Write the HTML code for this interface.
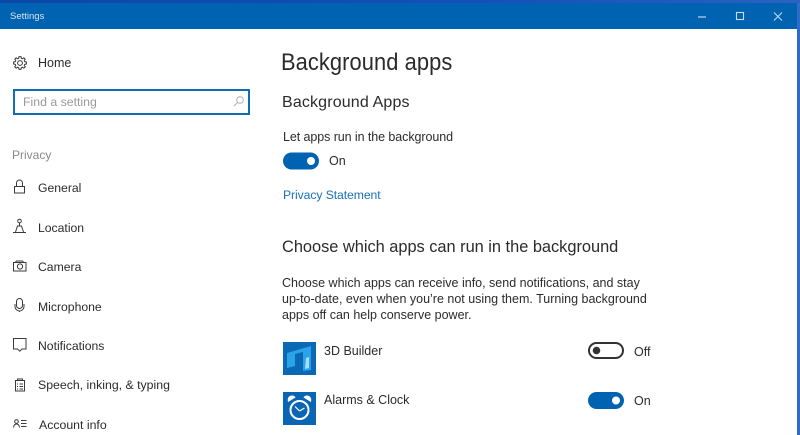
<!DOCTYPE html>
<html><head><meta charset="utf-8">
<style>
html,body{margin:0;padding:0;background:#fff}
#r{position:relative;width:800px;height:435px;overflow:hidden;background:#fff;font-family:"Liberation Sans",sans-serif;color:#2b2b2b}
.t{position:absolute;white-space:nowrap;line-height:1;filter:blur(.35px)}
svg{position:absolute;left:0;top:0}
</style></head><body>
<div id="r">
<div style="position:absolute;left:0;top:0;width:800px;height:4px;background:linear-gradient(90deg,#0a47a6,#1450b8 60%,#2a62c4)"></div>
<div style="position:absolute;left:0;top:3px;width:797px;height:26px;background:#0063b1"></div>
<div style="position:absolute;left:797px;top:3px;width:3px;height:432px;background:#2f6bc8"></div>
<div class="t" style="left:10px;top:12px;font-size:9.5px;color:#d5e6f5">Settings</div>
<svg width="800" height="435" fill="none">
<path d="M698 17H706" stroke="#bcd6ee" stroke-width="1.2"/>
<rect x="736.5" y="12.5" width="7" height="7" stroke="#c6dcf0" stroke-width="1.1"/>
<path d="M774 12.5L782 20.5M782 12.5L774 20.5" stroke="#c6dcf0" stroke-width="1"/>
<g stroke="#3a3a3a" stroke-width="1">
<g transform="translate(20 63)">
<polygon points="4.73,-1.27 6.42,-1.02 6.42,1.02 4.73,1.27 4.24,2.45 5.26,3.82 3.82,5.26 2.45,4.24 1.27,4.73 1.02,6.42 -1.02,6.42 -1.27,4.73 -2.45,4.24 -3.82,5.26 -5.26,3.82 -4.24,2.45 -4.73,1.27 -6.42,1.02 -6.42,-1.02 -4.73,-1.27 -4.24,-2.45 -5.26,-3.82 -3.82,-5.26 -2.45,-4.24 -1.27,-4.73 -1.02,-6.42 1.02,-6.42 1.27,-4.73 2.45,-4.24 3.82,-5.26 5.26,-3.82 4.24,-2.45"/>
<circle r="2.4"/>
</g>
<path d="M14.500 186.500h10v6.500h-10zM16.500 186v-3a3 3 0 0 1 6 0v3"/>
<circle cx="19.500" cy="221" r="1.800"/>
<path d="M15.500 232l2-6h4l2 6M13 232.500h13M19.500 223v3"/>
<rect x="13.500" y="262.500" width="12.500" height="8.500"/>
<circle cx="20" cy="266.500" r="2.600"/>
<path d="M15.500 262l1-1h6l1 1"/>
<rect x="16.500" y="298.500" width="6" height="10" rx="3"/>
<path d="M15 304v2.500a4.500 4.500 0 0 0 9 0V304M19.500 311v1"/>
<path d="M13.500 338.500h12.500v10.500h-4l-2.200 2.200-2.200-2.200h-4.100z"/>
<rect x="15.500" y="380.500" width="9" height="10.500"/>
<path d="M17.500 380v-1h5v1M17 384h1M19.500 384h3.500M17 386.500h1M19.500 386.500h3.500M17 389h1M19.500 389h3.500"/>
<circle cx="16.500" cy="421.500" r="1.800"/>
<path d="M13.500 427.500c.3-2.500 1.300-3.500 3-3.500s2.700 1 3 3.500M21 420.500h5.500M21 423.500h5.500M21 426.500h5.500"/>
</g>
<rect x="14" y="90" width="235" height="24" stroke="#0f6cb8" stroke-width="2"/>
<circle cx="240" cy="100" r="3.300" stroke="#b0b0b0"/>
<path d="M237.500 102.500L234 106" stroke="#b0b0b0"/>
<rect x="283" y="152.500" width="36" height="17" rx="8.500" fill="#0063b1"/>
<circle cx="311" cy="161" r="4" fill="#fff"/>
<rect x="589" y="343" width="34" height="15" rx="7.500" stroke="#333" stroke-width="2"/>
<circle cx="596.500" cy="350.500" r="3.800" fill="#333"/>
<rect x="588" y="392" width="36" height="17" rx="8.500" fill="#0063b1"/>
<circle cx="616" cy="400.500" r="4" fill="#fff"/>
<rect x="283" y="342" width="33" height="33" fill="#0a68b4"/>
<path d="M287 353L311 346V370L303 371V352L295 354V366L287 368Z" fill="#2ba3e8"/>
<path d="M306 358l3-1v11l-4 1z" fill="#a8dcf8"/>
<rect x="283" y="392" width="33" height="33" fill="#0a66b4"/>
<circle cx="299.500" cy="410" r="9" stroke="#fff" stroke-width="2"/>
<path d="M288 402c-1-4 1-6.500 4-6.500 2 0 3 1 3.500 2zM311 402c1-4-1-6.500-4-6.500-2 0-3 1-3.500 2z" fill="#fff"/>
<path d="M299.500 411l-4.500-4.500M299.500 411l5-3" stroke="#fff" stroke-width="1.200"/>
</svg>
<div class="t" style="left:38px;top:57px;font-size:12.500px">Home</div>
<div class="t" style="left:23px;top:96px;font-size:12.300px;color:#9a9a9a">Find a setting</div>
<div class="t" style="left:12px;top:149px;font-size:12px;color:#8a8a8a">Privacy</div>
<div class="t" style="left:38px;top:182px;font-size:12.200px">General</div>
<div class="t" style="left:38px;top:222px;font-size:12.200px">Location</div>
<div class="t" style="left:38px;top:261px;font-size:12.200px">Camera</div>
<div class="t" style="left:38px;top:301px;font-size:12.200px">Microphone</div>
<div class="t" style="left:38px;top:340px;font-size:12.200px">Notifications</div>
<div class="t" style="left:38px;top:379px;font-size:12.300px">Speech, inking, &amp; typing</div>
<div class="t" style="left:39px;top:419px;font-size:12.300px">Account info</div>
<div class="t" style="left:281px;top:51px;font-size:24px;letter-spacing:.1px;transform:scaleX(.91);transform-origin:0 0">Background apps</div>
<div class="t" style="left:282px;top:95px;font-size:16px;letter-spacing:.15px">Background Apps</div>
<div class="t" style="left:283px;top:131px;font-size:12.500px;letter-spacing:-.08px">Let apps run in the background</div>
<div class="t" style="left:329px;top:155px;font-size:12.500px">On</div>
<div class="t" style="left:283px;top:189px;font-size:12.200px;letter-spacing:-.08px;color:#1a70bb">Privacy Statement</div>
<div class="t" style="left:282px;top:239px;font-size:16.400px;letter-spacing:-.02px">Choose which apps can run in the background</div>
<div class="t" style="left:282px;top:277px;font-size:12.500px">Choose which apps can receive info, send notifications, and stay</div>
<div class="t" style="left:282px;top:293px;font-size:12.500px">up-to-date, even when you’re not using them. Turning background</div>
<div class="t" style="left:282px;top:309px;font-size:12.500px">apps off can help conserve power.</div>
<div class="t" style="left:324px;top:345px;font-size:12.500px">3D Builder</div>
<div class="t" style="left:324px;top:394px;font-size:12.500px">Alarms &amp; Clock</div>
<div class="t" style="left:634px;top:346px;font-size:12.500px">Off</div>
<div class="t" style="left:634px;top:395px;font-size:12.500px">On</div>
</div>
</body></html>
